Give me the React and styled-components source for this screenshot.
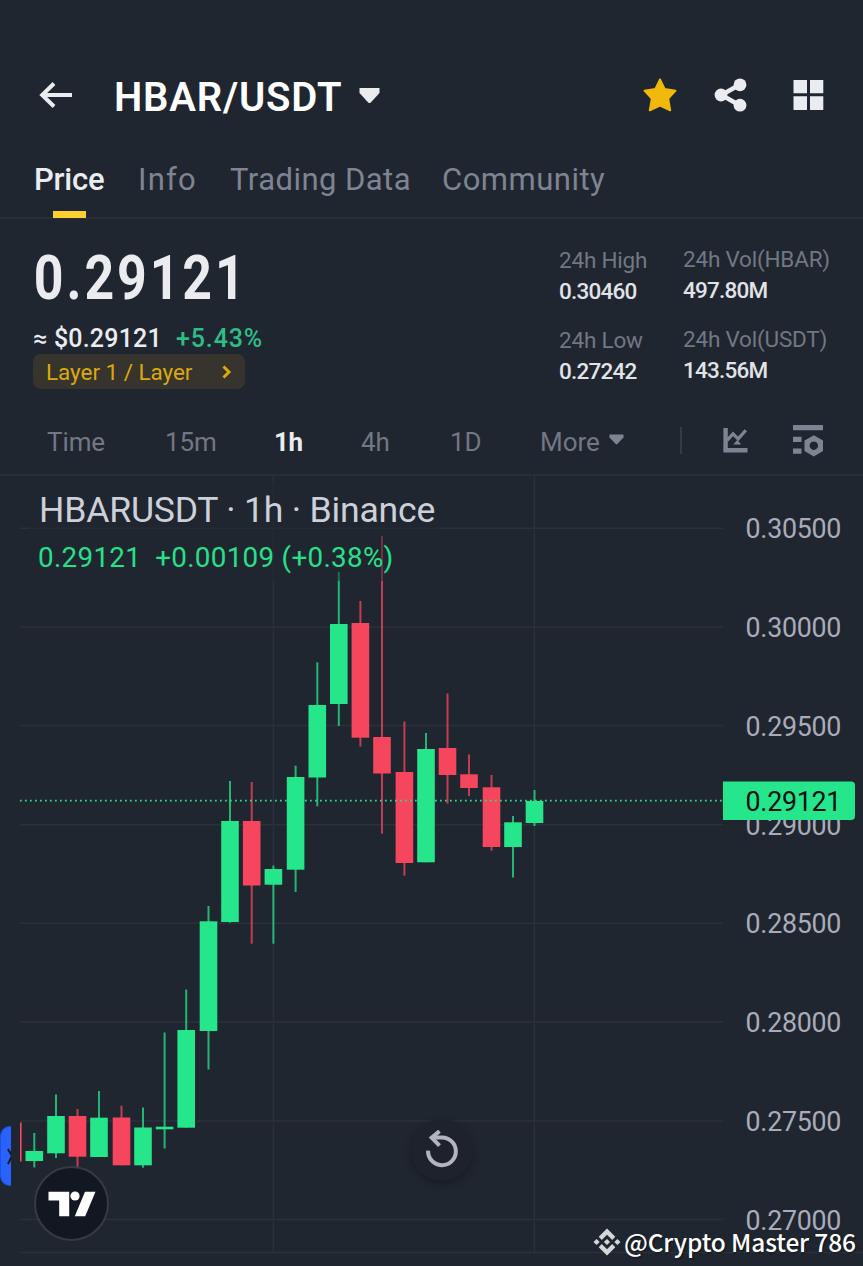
import React from 'react';
import styled, { createGlobalStyle } from 'styled-components';

const GlobalStyle = createGlobalStyle`
  * {
    box-sizing: border-box;
  }
  body {
    margin: 0;
    background: #202630;
    font-family: Roboto, 'Liberation Sans', sans-serif;
    color: #eaecef;
  }
`;

const tabs = [
  { label: 'Price', width: 104, spacing: -0.2, active: true },
  { label: 'Info', width: 92, spacing: 1.2 },
  { label: 'Trading Data', width: 212, spacing: 0.45 },
  { label: 'Community', width: 180, spacing: 0.5 },
];

const stats = [
  [
    { label: '24h High', value: '0.30460' },
    { label: '24h Low', value: '0.27242' },
  ],
  [
    { label: '24h Vol(HBAR)', value: '497.80M' },
    { label: '24h Vol(USDT)', value: '143.56M' },
  ],
];

const intervals = [
  { label: 'Time', width: 118 },
  { label: '15m', width: 109 },
  { label: '1h', width: 87, active: true },
  { label: '4h', width: 89 },
  { label: '1D', width: 90 },
];

const levels = [
  { y: 528.3, label: '0.30500' },
  { y: 627, label: '0.30000' },
  { y: 725.6, label: '0.29500' },
  { y: 824.7, label: '0.29000' },
  { y: 923.2, label: '0.28500' },
  { y: 1022, label: '0.28000' },
  { y: 1121, label: '0.27500' },
  { y: 1219.6, label: '0.27000' },
];

// [center, high, body top, body bottom, low, rising]
const candles = [
  [34.3, 1133, 1151, 1161, 1167.5, 1],
  [56, 1094.5, 1116, 1153.3, 1158, 1],
  [77.5, 1109, 1116, 1156.7, 1168.5, 0],
  [99, 1091, 1117.7, 1157, 1157, 1],
  [121.5, 1105.7, 1117.5, 1165.3, 1165.3, 0],
  [143, 1107.5, 1127.5, 1165.3, 1167.7, 1],
  [164.6, 1032.5, 1126.7, 1129.3, 1148.5, 1],
  [186.2, 989.5, 1030, 1127.7, 1127.7, 1],
  [208.5, 906, 921.3, 1031, 1069.5, 1],
  [230, 781, 821, 922, 922.7, 1],
  [251.7, 782, 821, 885.5, 943.7, 0],
  [273.4, 865.5, 869, 884.7, 943.7, 1],
  [295.6, 765.7, 777, 869.7, 892, 1],
  [317.3, 662.3, 705, 777.5, 806.3, 1],
  [338.8, 572, 624, 704, 726, 1],
  [360.4, 601, 623, 737.7, 746.5, 0],
  [382, 536, 737, 773.5, 833.7, 0],
  [404.4, 721.5, 772, 863, 875.7, 0],
  [426, 733, 749, 862.3, 862.3, 1],
  [447.5, 693.5, 748, 775, 803.7, 0],
  [469, 754.5, 774.3, 788, 796, 0],
  [491.5, 775, 787.3, 847, 850.7, 0],
  [513, 816, 822.3, 847, 877.5, 1],
  [534.5, 790, 801, 823, 826, 1],
];

const Page = styled.main`
  position: relative;
  display: flex;
  flex-direction: column;
  width: 863px;
  height: 1266px;
  overflow: hidden;
  background: #202630;
`;

const Header = styled.header`
  display: flex;
  align-items: center;
  height: 70px;
  margin-top: 60px;
  padding: 0 39px;
`;

const Pair = styled.h1`
  width: 228px;
  margin: 5px 17px 0 41px;
  font-size: 40px;
  font-weight: 600;
  line-height: 48px;
  letter-spacing: 0.8px;
  white-space: nowrap;
  color: #fff;
`;

const Actions = styled.div`
  display: flex;
  align-items: center;
  gap: 37px;
  margin-left: auto;
`;

const Tabs = styled.nav`
  display: flex;
  height: 89px;
  padding: 31px 0 0 34px;
  border-bottom: 2px solid #292f39;
`;

const Tab = styled.div`
  display: flex;
  flex-direction: column;
  align-items: flex-start;
  justify-content: space-between;
  flex: 0 0 ${(p) => p.$width}px;
  font-size: 31px;
  font-weight: ${(p) => (p.$active ? 500 : 450)};
  line-height: 38px;
  letter-spacing: ${(p) => p.$spacing}px;
  white-space: nowrap;
  color: ${(p) => (p.$active ? '#eaecef' : '#7e8491')};
`;

const TabMark = styled.span`
  width: 33px;
  height: 7px;
  margin-left: 19px;
  margin-bottom: -1px;
  background: #fcd12f;
`;

const Summary = styled.section`
  display: flex;
  height: 188px;
  padding-left: 33px;
`;

const PriceBlock = styled.div`
  flex: 0 0 526px;
  padding-top: 24px;
`;

const Price = styled.div`
  height: 72px;
  padding-left: 1px;
  font-size: 61px;
  font-weight: 700;
  line-height: 71px;
  letter-spacing: 3.4px;
  transform: scaleX(0.85);
  transform-origin: left;
`;

const Converted = styled.div`
  display: flex;
  align-items: center;
  gap: 14px;
  height: 39px;
  padding-top: 8px;
  font-size: 25px;
  font-weight: 500;
  line-height: 31px;
  letter-spacing: 0.2px;
  white-space: nowrap;
`;

const Change = styled.span`
  color: #2ebd85;
  letter-spacing: 0.9px;
`;

const Tag = styled.div`
  display: flex;
  align-items: center;
  justify-content: space-between;
  width: 212px;
  height: 35px;
  padding: 0 13px;
  border-radius: 8px;
  background: #36342d;
  color: #dba90e;
  font-size: 22.5px;
  letter-spacing: -0.05px;
`;

const StatColumn = styled.div`
  display: flex;
  flex-direction: column;
  gap: 20px;
  flex: 0 0 124px;
  padding-top: ${(p) => p.$top}px;
  font-size: 22.5px;
  white-space: nowrap;
`;

const Stat = styled.dl`
  margin: 0;
  height: 60px;
`;

const StatLabel = styled.dt`
  line-height: 28px;
  letter-spacing: -0.2px;
  color: #717783;
`;

const StatValue = styled.dd`
  margin: 3px 0 0;
  line-height: 28px;
  font-weight: 500;
  letter-spacing: -0.8px;
  color: #e0e3e8;
`;

const Toolbar = styled.div`
  display: flex;
  align-items: center;
  height: 69px;
  padding-left: 47px;
  border-bottom: 2px solid #292f39;
`;

const Interval = styled.span`
  flex: 0 0 ${(p) => p.$width}px;
  padding-top: 2px;
  font-size: 26px;
  font-weight: ${(p) => (p.$active ? 700 : 400)};
  letter-spacing: ${(p) => (p.$active ? -0.5 : -0.1)}px;
  color: ${(p) => (p.$active ? '#eaecef' : '#717783')};
`;

const More = styled.span`
  display: flex;
  align-items: center;
  gap: 9px;
  flex: 0 0 140px;
  padding-top: 2px;
  font-size: 26px;
  color: #717783;

  svg {
    margin-top: -3px;
  }
`;

const Divider = styled.i`
  width: 2px;
  height: 27px;
  margin-right: 41px;
  background: #363c47;
`;

const Tools = styled.div`
  display: flex;
  align-items: center;
  gap: 44px;
`;

const Chart = styled.section`
  position: relative;
  height: 790px;
`;

const Plot = styled.svg`
  display: block;

  text {
    font-family: Roboto, sans-serif;
    font-size: 26.8px;
    letter-spacing: -0.25px;
  }
`;

const Legend = styled.div`
  position: absolute;
  top: 6px;
  left: 28px;
  width: 412px;
  height: 99px;
  padding: 1px 0 0 11px;
  background: rgba(32, 38, 48, 0.5);
  white-space: nowrap;
`;

const LegendTitle = styled.div`
  height: 53px;
  font-size: 35.6px;
  line-height: 55px;
  letter-spacing: -0.2px;
  color: #cdd0d9;
`;

const LegendValues = styled.div`
  display: flex;
  gap: 14px;
  margin-left: -1px;
  font-size: 27.8px;
  line-height: 43px;
  letter-spacing: 0.3px;
  color: #26e08a;
`;

const Reset = styled.button`
  position: absolute;
  left: 411px;
  top: 643px;
  display: grid;
  place-items: center;
  width: 62px;
  height: 62px;
  padding: 0;
  border: 0;
  border-radius: 50%;
  background: #1e222d;
  box-shadow: 0 3px 6px rgba(14, 17, 26, 0.5);
`;

const Brand = styled.div`
  position: absolute;
  left: 34px;
  top: 690px;
  display: grid;
  place-items: center;
  width: 75px;
  height: 75px;
  border: 2px solid #363a45;
  border-radius: 50%;
  background: #131722;
`;

const Drawer = styled.div`
  position: absolute;
  left: 0;
  top: 650px;
  width: 11px;
  height: 60px;
  border: 1px solid #1b53e0;
  border-right: 0;
  border-radius: 10px 0 0 10px;
  background: #2962ff;
  overflow: hidden;
`;

const Watermark = styled.div`
  position: absolute;
  left: 593px;
  top: 1225px;
  display: flex;
  align-items: center;
  gap: 3px;
  font-family: 'Noto Sans CJK SC', sans-serif;
  font-size: 24.5px;
  font-weight: 500;
  line-height: 34px;
  letter-spacing: -0.15px;
  white-space: nowrap;
  color: #fff;
  text-shadow: 1px 1px 2px rgba(0, 0, 0, 0.6);
`;

function Candle({ data }) {
  const [x, high, top, bottom, low, rising] = data;
  return (
    <g fill={rising ? '#26e68c' : '#f6465d'}>
      <rect x={x - 1} y={high} width='2' height={low - high} opacity='0.75' />
      <rect x={x - 8.8} y={top} width='17.6' height={bottom - top} />
    </g>
  );
}

function PriceChart() {
  return (
    <Plot width='863' height='790' viewBox='0 476 863 790'>
      <g stroke='#2b313b' strokeWidth='1.5'>
        {levels.map((level) => (
          <path key={level.label} d={`M20 ${level.y}H723`} />
        ))}
        <path d='M20 1252.5H863M273.4 475V1252M534.4 475V1252' />
      </g>
      <rect x='20' y='1122.5' width='1.6' height='39' fill='#f6465d' />
      {candles.map((data) => (
        <Candle key={data[0]} data={data} />
      ))}
      <path d='M20 800.6H723' stroke='#26e08a' strokeWidth='1.7' strokeDasharray='1.7 3.3' />
      <g fill='#a9acb8'>
        {levels.map((level) => (
          <text key={level.label} x='745.5' y={level.y + 9.9}>
            {level.label}
          </text>
        ))}
      </g>
      <path d='M723 781.5H851a4 4 0 0 1 4 4V816a4 4 0 0 1-4 4H723z' fill='#26e68c' />
      <text x='745.5' y='810.6' fill='#0c1014'>
        0.29121
      </text>
    </Plot>
  );
}

function App() {
  return (
    <Page>
      <GlobalStyle />
      <Header>
        <svg width='34' height='28' viewBox='0 0 34 28' fill='none' stroke='#eaecef' strokeWidth='4'>
          <path d='M33 14H4M15 2.5 3.2 14 15 25.5' />
        </svg>
        <Pair>HBAR/USDT</Pair>
        <svg width='22' height='17' viewBox='0 0 22 17' fill='#eaecef'>
          <path d='M.5 1h20v5L11.8 15.5q-1.3 1.2-2.6 0L.5 6z' />
        </svg>
        <Actions>
          <svg width='34' height='34' viewBox='0 0 34 34' fill='#f0b90b' stroke='#f0b90b' strokeWidth='2' strokeLinejoin='round'>
            <path d='m17 1.5 4.7 9.6 10.8 1.6-7.3 8 2 11.6-10.2-4.8-10.2 4.8 2-11.6-7.3-8 10.8-1.6z' />
          </svg>
          <svg width='34' height='34' viewBox='0 0 34 34' fill='#eaecef'>
            <path d='M7.5 17 26 6.5M7.5 17 26 27.5' stroke='#eaecef' strokeWidth='4.4' />
            <circle cx='7' cy='17' r='6.4' />
            <circle cx='26' cy='6.8' r='6.4' />
            <circle cx='26' cy='27.2' r='6.4' />
          </svg>
          <svg width='39' height='32' viewBox='0 0 39 32' fill='#eaecef'>
            <path d='M8.5 1H22v13.3H8.5zM25 1h13.3v13.3H25zM8.5 17.3H22V31H8.5zM25 17.3h13.3V31H25z' />
          </svg>
        </Actions>
      </Header>

      <Tabs>
        {tabs.map((tab) => (
          <Tab key={tab.label} $width={tab.width} $spacing={tab.spacing} $active={tab.active}>
            {tab.label}
            {tab.active && <TabMark />}
          </Tab>
        ))}
      </Tabs>

      <Summary>
        <PriceBlock>
          <Price>0.29121</Price>
          <Converted>
            <span>≈ $0.29121</span>
            <Change>+5.43%</Change>
          </Converted>
          <Tag>
            Layer 1 / Layer
            <svg width='10' height='14' viewBox='0 0 10 14' fill='none' stroke='#dba90e' strokeWidth='3'>
              <path d='m1.5 1.5 5.5 5.5-5.5 5.5' />
            </svg>
          </Tag>
        </PriceBlock>
        {stats.map((column, index) => (
          <StatColumn key={index} $top={index === 0 ? 27 : 26}>
            {column.map((item) => (
              <Stat key={item.label}>
                <StatLabel>{item.label}</StatLabel>
                <StatValue>{item.value}</StatValue>
              </Stat>
            ))}
          </StatColumn>
        ))}
      </Summary>

      <Toolbar>
        {intervals.map((item) => (
          <Interval key={item.label} $width={item.width} $active={item.active}>
            {item.label}
          </Interval>
        ))}
        <More>
          More
          <svg width='15' height='12' viewBox='0 0 15 12' fill='#7e8491'>
            <path d='M.5.5h14v3L8.3 10q-.8.8-1.6 0L.5 3.5z' />
          </svg>
        </More>
        <Divider />
        <Tools>
          <svg width='25' height='26' viewBox='0 0 25 26' fill='none' stroke='#7e8491'>
            <path d='M2.6 0v22.3H24.5' strokeWidth='4.4' />
            <path d='m4 12.4 6-6.5 5.2 5L22.8 2.3' strokeWidth='3.2' />
            <path d='m14.2 12 4 4.6h-8z' fill='#7e8491' stroke='none' />
          </svg>
          <svg width='32' height='33' viewBox='0 0 32 33' fill='#7e8491'>
            <path d='M1 .9h30v5.4H1zM1 12.8h8.5v5.2H1zM1 24.6h8.5v5.2H1z' />
            <path fillRule='evenodd' d='m21.8 11.2 9.2 5.2v10.6l-9.2 5.5-9.3-5.5V16.4zM21.8 17.5a4.2 4.2 0 1 0 .01 0z' />
          </svg>
        </Tools>
      </Toolbar>

      <Chart>
        <PriceChart />
        <Legend>
          <LegendTitle>HBARUSDT · 1h · Binance</LegendTitle>
          <LegendValues>
            <span>0.29121</span>
            <span>+0.00109 (+0.38%)</span>
          </LegendValues>
        </Legend>
        <Drawer>
          <svg width='10' height='58' viewBox='0 0 10 58' fill='none' stroke='#131722' strokeWidth='2'>
            <path d='m7 22 4 7-4 8' />
          </svg>
        </Drawer>
        <Brand>
          <svg width='48' height='26' viewBox='0 0 48 26' fill='#fff'>
            <path d='M.5.8h20.7v24.4h-10V9.5H.5zM37 .8h10.5L37.2 25.2H26.8z' />
            <circle cx='27' cy='5' r='4.6' />
          </svg>
        </Brand>
        <Reset>
          <svg width='34' height='40' viewBox='0 0 34 40' fill='none' stroke='#b2b5be' strokeWidth='4'>
            <path d='M3.1 20.6a13.9 13.9 0 1 0 13.9-13.2H7' />
            <path d='M14.5 1.2 6.7 7.6l7.8 8' />
          </svg>
        </Reset>
      </Chart>

      <Watermark>
        <svg width='28' height='28' viewBox='0 0 28 28' fill='#d5d6d8'>
          <path d='m14 .5 8.3 8.3-3.1 3.1L14 6.7l-5.2 5.2-3.1-3.1zM14 27.5l-8.3-8.3 3.1-3.1 5.2 5.2 5.2-5.2 3.1 3.1zM3.6 10.9 6.7 14l-3.1 3.1L.5 14zM24.4 10.9l3.1 3.1-3.1 3.1-3.1-3.1zM14 10.9l3.1 3.1-3.1 3.1-3.1-3.1z' />
        </svg>
        <span>@Crypto Master 786</span>
      </Watermark>
    </Page>
  );
}

export default App;
